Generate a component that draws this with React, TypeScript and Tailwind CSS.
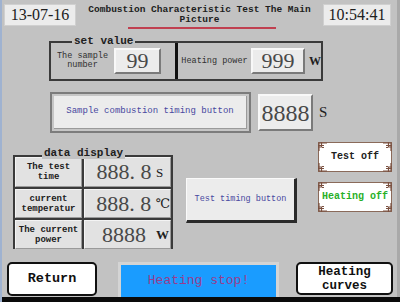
import React from "react";

const mono = { fontFamily: '"Liberation Mono", "DejaVu Sans Mono", monospace' };
const serif = { fontFamily: '"Liberation Serif", "DejaVu Serif", serif' };

function Corner({ className }: { className: string }) {
  return (
    <svg width="9" height="9" viewBox="0 0 9 9" className={`absolute ${className}`}>
      <path d="M1 9 V1 H9 M3.5 0 V5 H0 M0 3.5 H6 M4 5.5 H6" stroke="#7a5040" strokeWidth="1.2" fill="none" />
    </svg>
  );
}

function Indicator({ text, color }: { text: string; color: string }) {
  return (
    <div className="relative w-[74px] h-[30px] bg-white border border-[#8a6a5a] flex items-center justify-center">
      <Corner className="left-[-1px] top-[-1px]" />
      <Corner className="right-[-1px] top-[-1px] -scale-x-100" />
      <Corner className="left-[-1px] bottom-[-1px] -scale-y-100" />
      <Corner className="right-[-1px] bottom-[-1px] -scale-100" />
      <span className="text-[10px] font-bold leading-none" style={{ ...mono, color }}>
        {text}
      </span>
    </div>
  );
}

function Raised({ className, children }: { className: string; children: React.ReactNode }) {
  return (
    <div
      className={`bg-[#ececec] border-t-2 border-l-2 border-t-[#f8f8f8] border-l-[#f8f8f8] border-b-2 border-r-2 border-b-[#7a7a7a] border-r-[#7a7a7a] flex items-center justify-center ${className}`}
    >
      {children}
    </div>
  );
}

function LabelCell({ l1, l2 }: { l1: string; l2: string }) {
  return (
    <div className="bg-[#e2e2e2] border-t border-l border-t-[#f4f4f4] border-l-[#f4f4f4] border-b border-r border-b-[#9a9a9a] border-r-[#9a9a9a] flex flex-col items-center justify-center text-[9px] leading-[10px] font-bold text-[#202020]" style={mono}>
      <span>{l1}</span>
      <span>{l2}</span>
    </div>
  );
}

function ValueCell({ value, unit, boldUnit }: { value: string; unit: string; boldUnit?: boolean }) {
  return (
    <div className="bg-[#e2e2e2] border-t border-l border-t-[#f4f4f4] border-l-[#f4f4f4] border-b border-r border-b-[#9a9a9a] border-r-[#9a9a9a] flex items-center pl-[7px]">
      <span className="text-[22px] leading-none text-[#484848] w-[64px] text-center" style={serif}>
        {value}
      </span>
      <span className={`text-[13px] leading-none text-[#202020] ${boldUnit ? "font-bold" : ""}`} style={serif}>
        {unit}
      </span>
    </div>
  );
}

export default function App() {
  return (
    <div className="w-[400px] h-[302px] flex bg-[#c2c2c2] overflow-hidden">
      <div className="w-[2px] h-full bg-[#9fb2d0]" />
      <div className="flex-1 flex flex-col border-r-[3px] border-r-[#a9a9a9]">
        {/* Row 1 */}
        <div className="flex h-[36px] pt-[4px]">
          <div className="ml-[2px] w-[72px] h-[22px] bg-[#ececec] border border-[#d0d0d0] flex items-center justify-center text-[16px] text-[#202020]" style={serif}>
            13-07-16
          </div>
          <div className="flex-1 flex flex-col items-center">
            <div className="text-[9.5px] leading-[10px] font-bold text-[#202020] text-center mt-[1px]" style={mono}>
              <div>Combustion Characteristic Test The Main</div>
              <div>Picture</div>
            </div>
            <div className="w-[148px] h-[2px] bg-[#c04050] mt-[2px] ml-[5px]" />
          </div>
          <div className="mr-[6px] w-[68px] h-[22px] bg-[#ececec] border border-[#d0d0d0] flex items-center justify-center text-[16px] text-[#202020]" style={serif}>
            10:54:41
          </div>
        </div>

        {/* Row 2: set value */}
        <div className="relative ml-[47px] mt-[5px] w-[274px] h-[40px] border-2 border-[#3a3a3a] flex">
          <div className="absolute left-[21px] top-[-8px] px-[2px] bg-[#c2c2c2] text-[11px] leading-[12px] font-bold text-[#202020]" style={mono}>
            set value
          </div>
          <div className="w-[126px] flex items-center">
            <div className="w-[63px] text-center text-[8.5px] leading-[9px] text-[#303030]" style={mono}>
              <div>The sample</div>
              <div>number</div>
            </div>
            <Raised className="w-[47px] h-[26px]">
              <span className="text-[22px] leading-none text-[#484848]" style={serif}>99</span>
            </Raised>
          </div>
          <div className="w-[3px] bg-[#101010]" />
          <div className="flex-1 flex items-center">
            <div className="w-[73px] text-center text-[8.5px] text-[#303030]" style={mono}>Heating power</div>
            <Raised className="w-[54px] h-[26px]">
              <span className="text-[22px] leading-none text-[#484848]" style={serif}>999</span>
            </Raised>
            <span className="ml-[4px] text-[12px] font-bold text-[#202020]" style={serif}>W</span>
          </div>
        </div>

        {/* Row 3 */}
        <div className="flex mt-[11px] items-center h-[41px]">
          <div className="ml-[48px] w-[201px] h-[41px] border-2 border-[#7c7c7c] bg-[#c6c6c6] p-[2px]">
            <div className="w-full h-full bg-[#ececec] border-b border-r border-b-[#9a9a9a] border-r-[#9a9a9a] flex items-center justify-center text-[9px] text-[#4848a0]" style={mono}>
              Sample combustion timing button
            </div>
          </div>
          <Raised className="ml-[7px] w-[55px] h-[37px]">
            <span className="text-[24px] leading-none text-[#484848]" style={serif}>8888</span>
          </Raised>
          <span className="ml-[6px] text-[15px] text-[#202020]" style={serif}>S</span>
        </div>

        {/* Row 4 */}
        <div className="flex mt-[9px]">
          <div className="ml-[11px] pt-[13px]">
            <div className="relative w-[160px] h-[94px] border-2 border-[#3a3a3a] bg-[#3a3a3a] grid grid-cols-[67px_87px] grid-rows-[30px_29px_29px] gap-[2px]">
              <div className="absolute left-[27px] top-[-10px] px-[2px] bg-[#c2c2c2] text-[11px] leading-[12px] font-bold text-[#202020]" style={mono}>
                data display
              </div>
              <LabelCell l1="The test" l2="time" />
              <ValueCell value="888. 8" unit="S" />
              <LabelCell l1="current" l2="temperatur" />
              <ValueCell value="888. 8" unit="℃" />
              <LabelCell l1="The current" l2="power" />
              <ValueCell value="8888" unit="W" boldUnit />
            </div>
          </div>
          <div className="ml-[13px] mt-[36px] w-[111px] h-[45px] bg-[#ececec] border-t border-l border-t-[#fafafa] border-l-[#fafafa] border-b-[3px] border-r-[3px] border-b-[#2a2a2a] border-r-[#2a2a2a] flex items-center justify-center text-[8.5px] text-[#4848a0]" style={mono}>
            Test timing button
          </div>
          <div className="ml-[21px] flex flex-col gap-[10px]">
            <Indicator text="Test off" color="#202020" />
            <Indicator text="Heating off" color="#28b028" />
          </div>
        </div>

        {/* Row 5 */}
        <div className="flex mt-[13px]">
          <div className="ml-[5px] w-[90px] h-[34px] bg-white border-2 border-[#101010] rounded-[5px] flex items-center justify-center text-[13.5px] font-bold text-[#101010]" style={mono}>
            Return
          </div>
          <div className="ml-[21px] w-[161px] h-[35px] bg-[#d4d4d4] p-[3px] pb-0">
            <div className="w-full h-full bg-[#1a9cff] flex items-center justify-center text-[13px] text-[#9a3c8c]" style={mono}>
              Heating stop!
            </div>
          </div>
          <div className="ml-[17px] w-[97px] h-[33px] bg-white border-2 border-[#101010] rounded-[5px] flex flex-col items-center justify-center text-[12.5px] leading-[14px] font-bold text-[#101010]" style={mono}>
            <span>Heating</span>
            <span>curves</span>
          </div>
        </div>

        <div className="mt-auto h-[5px] bg-[#0a0a0a] -mr-[3px]" />
      </div>
    </div>
  );
}
